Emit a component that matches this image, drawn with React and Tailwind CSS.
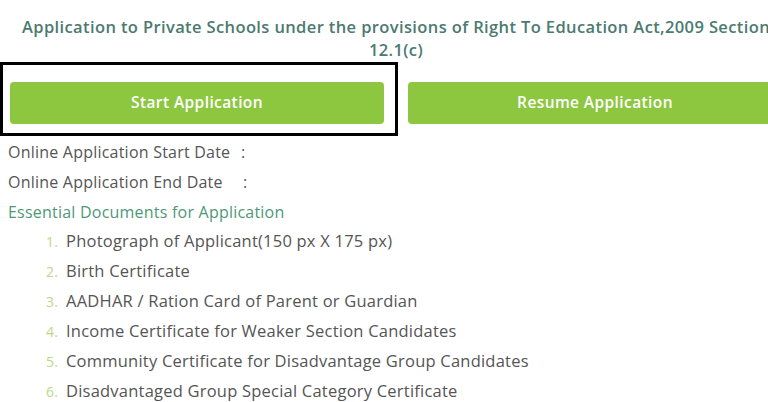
import React from "react";

const docs = [
  "Photograph of Applicant(150 px X 175 px)",
  "Birth Certificate",
  "AADHAR / Ration Card of Parent or Guardian",
  "Income Certificate for Weaker Section Candidates",
  "Community Certificate for Disadvantage Group Candidates",
  "Disadvantaged Group Special Category Certificate",
];

export default function App() {
  return (
    <div className="w-[768px] h-[402px] overflow-hidden bg-white" style={{ fontFamily: '"Open Sans", "Liberation Sans", sans-serif' }}>
      <div className="relative w-[792px]">
        <h1 className="pt-[15px] text-center text-[16.5px] leading-[23px] font-semibold tracking-[0.38px] text-[#4c7a70] whitespace-nowrap">
          Application to Private Schools under the provisions of Right To Education Act,2009 Section
          <br />
          12.1(c)
        </h1>
        <div className="mt-[21px] grid grid-cols-2 gap-[24px] px-[10px]">
          <button className="h-[42px] rounded-[4px] bg-[#8dc73f] text-white text-[15.5px] font-semibold tracking-[0.4px]">Start Application</button>
          <button className="h-[42px] rounded-[4px] bg-[#8dc73f] text-white text-[15.5px] font-semibold tracking-[0.4px]">Resume Application</button>
        </div>
        <div className="absolute left-0 top-[62px] w-[398px] h-[74px] border-[3px] border-black"></div>
        <div className="mt-[13px] px-[8px] text-[16px] tracking-[0.22px] text-[#555]">
          <div className="flex h-[30px] items-center">
            <span className="w-[233px]">Online Application Start Date</span>
            <span>:</span>
          </div>
          <div className="flex h-[30px] items-center">
            <span className="w-[235px]">Online Application End Date</span>
            <span>:</span>
          </div>
          <div className="flex h-[29px] items-center text-[#4f9877]">Essential Documents for Application</div>
          <ol className="pl-[38px]">
            {docs.map((d, i) => (
              <li key={i} className="flex h-[30px] items-center">
                <span className="w-[20px] text-[#c0d68a] text-[14px]">{i + 1}.</span>
                <span className="text-[16.5px]">{d}</span>
              </li>
            ))}
          </ol>
        </div>
      </div>
    </div>
  );
}
